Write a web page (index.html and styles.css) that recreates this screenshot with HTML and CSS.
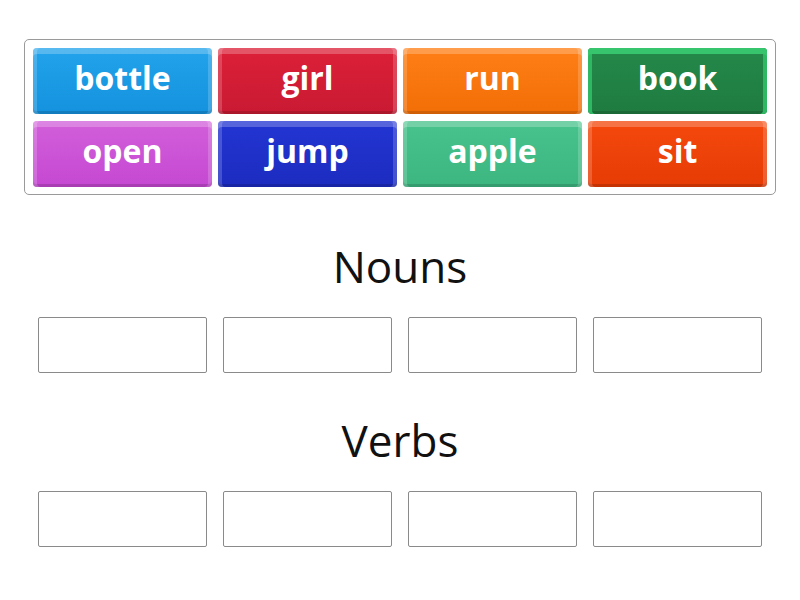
FILE: index.html
```html
<!DOCTYPE html>
<html>
<head>
<meta charset="utf-8">
<link rel="stylesheet" href="styles.css">
</head>
<body>
<div class="bank">
  <div class="tile blue">bottle</div>
  <div class="tile red">girl</div>
  <div class="tile orange">run</div>
  <div class="tile green">book</div>
  <div class="tile purple">open</div>
  <div class="tile navy">jump</div>
  <div class="tile mint">apple</div>
  <div class="tile vermilion">sit</div>
</div>
<h2 class="group-title">Nouns</h2>
<div class="slots">
  <div class="slot"></div>
  <div class="slot"></div>
  <div class="slot"></div>
  <div class="slot"></div>
</div>
<h2 class="group-title">Verbs</h2>
<div class="slots">
  <div class="slot"></div>
  <div class="slot"></div>
  <div class="slot"></div>
  <div class="slot"></div>
</div>
</body>
</html>
```

FILE: styles.css
```css
html, body {
  margin: 0;
  padding: 0;
  background: #ffffff;
  font-family: "Open Sans", "Noto Sans", sans-serif;
}

.bank {
  box-sizing: border-box;
  width: 752px;
  margin: 39px 0 0 24px;
  padding: 8px 8px 7px 8px;
  border: 1px solid #9a9a9a;
  border-radius: 5px;
  display: grid;
  grid-template-columns: repeat(4, 179px);
  grid-auto-rows: 66px;
  column-gap: 6px;
  row-gap: 7px;
}

.tile {
  border-radius: 4px;
  color: #ffffff;
  font-weight: 700;
  font-size: 32px;
  display: flex;
  align-items: center;
  justify-content: center;
  padding-bottom: 7px;
  box-sizing: border-box;
  box-shadow:
    inset 0 6px 0 rgba(255, 255, 255, 0.24),
    inset 4px 0 0 rgba(255, 255, 255, 0.18),
    inset -4px 0 0 rgba(255, 255, 255, 0.18),
    inset 0 -3px 0 rgba(0, 0, 0, 0.14);
}

.blue { background: linear-gradient(#22a3eb, #1592de); }
.red { background: linear-gradient(#dc2038, #c91a33); }
.orange { background: linear-gradient(#ff7f16, #f26e06); }
.green { background: linear-gradient(#24894a, #1f7b40); box-shadow: inset 0 6px 0 #36c46d, inset 4px 0 0 #2fb863, inset -4px 0 0 #2fb863, inset 0 -3px 0 rgba(0,0,0,0.14); }
.purple { background: linear-gradient(#d25fda, #c548d2); }
.navy { background: linear-gradient(#2335d2, #1c2cc0); }
.mint { background: linear-gradient(#48c38d, #3db680); }
.vermilion { background: linear-gradient(#f4480d, #e63c05); }

.group-title {
  margin: 41px 0 0 0;
  height: 60px;
  line-height: 60px;
  font-size: 44px;
  font-weight: 400;
  color: #111111;
  text-align: center;
}

.slots {
  display: flex;
  gap: 16px;
  margin: 21px 0 0 38px;
}

.slot {
  box-sizing: border-box;
  width: 169px;
  height: 56px;
  border: 1px solid #8a8a8a;
  border-radius: 2px;
}

.slots + .group-title {
  margin-top: 37px;
}
```
